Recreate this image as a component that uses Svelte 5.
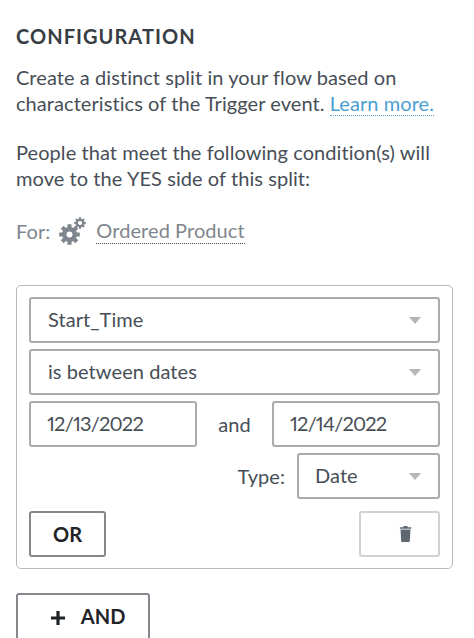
<script lang="ts">
	let field = $state('Start_Time');
	let operator = $state('is between dates');
	let startDate = $state('12/13/2022');
	let endDate = $state('12/14/2022');
	let dateType = $state('Date');
</script>

{#snippet gear(cx: number, cy: number, r: number, hole: number, teeth: number)}
	<g transform="translate({cx} {cy})">
		{#each Array(teeth) as _, i}
			<rect
				x={-r * 0.2}
				y={-r}
				width={r * 0.4}
				height={r * 0.5}
				rx="0.3"
				transform="rotate({(360 / teeth) * i})"
			/>
		{/each}
		<circle r={r * 0.72} />
		<circle r={hole} fill="#fff" />
	</g>
{/snippet}

<main class="panel">
	<h2>CONFIGURATION</h2>
	<p class="intro">
		Create a distinct split in your flow based on characteristics of the Trigger event.
		<a href="#learn">Learn more.</a>
	</p>
	<p class="intro">People that meet the following condition(s) will move to the YES side of this split:</p>

	<div class="for-row">
		<span>For:</span>
		<svg class="gears" viewBox="0 0 27 28" width="27" height="28" fill="#7f858c" aria-hidden="true">
			{@render gear(10.5, 17.5, 10.3, 3, 8)}
			{@render gear(21, 6, 5.7, 2.1, 8)}
		</svg>
		<span class="trigger">Ordered Product</span>
	</div>

	<section class="conditions">
		<div class="select">{field}<i class="caret"></i></div>
		<div class="select">{operator}<i class="caret"></i></div>
		<div class="dates">
			<div class="input">{startDate}</div>
			<span>and</span>
			<div class="input">{endDate}</div>
		</div>
		<div class="type-row">
			<span>Type:</span>
			<div class="select type">{dateType}<i class="caret"></i></div>
		</div>
		<div class="actions">
			<button class="btn or">OR</button>
			<button class="btn trash" aria-label="Delete">
				<svg viewBox="0 0 14 18" width="13" height="16" fill="#5f6871">
					<path d="M5 0h4l.6 1.3H13.4V3H.6V1.3H4.4zM1.4 4h11.2l-.7 12.6c0 .8-.6 1.4-1.4 1.4H3.5c-.8 0-1.4-.6-1.4-1.4z" />
				</svg>
			</button>
		</div>
	</section>

	<button class="btn and">
		<svg class="plus" viewBox="0 0 14 14" width="14" height="14" fill="#1f2327" aria-hidden="true">
			<path d="M5.4 0h3.2v5.4H14v3.2H8.6V14H5.4V8.6H0V5.4h5.4z" />
		</svg>
		AND
	</button>
</main>

<style>
	:global(body) {
		background: #fff;
	}

	.panel {
		box-sizing: border-box;
		width: 474px;
		height: 638px;
		overflow: hidden;
		padding: 23px 21px 0 16px;
		font-family: 'Lato', sans-serif;
		font-size: 20px;
		letter-spacing: 0.07px;
		color: #474e56;
	}

	h2 {
		margin: 0 0 15px;
		font-size: 20px;
		line-height: 26px;
		font-weight: 700;
		letter-spacing: 1.05px;
		color: #373d44;
	}

	.intro {
		margin: 0 0 23px;
		line-height: 26px;
	}

	a {
		color: #4a9fd0;
		text-decoration: none;
		border-bottom: 1px dotted #4a9fd0;
	}

	.for-row {
		display: flex;
		align-items: center;
		gap: 10px;
		height: 30px;
		margin-top: 25px;
		margin-bottom: 39px;
		color: #80868d;
	}

	.gears {
		margin: 0 0 0 -1px;
	}

	.trigger {
		border-bottom: 1px dotted #474e56;
		line-height: 25px;
	}

	.conditions {
		display: flex;
		flex-direction: column;
		gap: 6px;
		box-sizing: border-box;
		padding: 11px 12px;
		border: 1px solid #b4b9be;
		border-radius: 5px;
	}

	.select,
	.input {
		box-sizing: border-box;
		display: flex;
		align-items: center;
		height: 46px;
		padding: 0 17px 2px;
		border: 2px solid #a9abae;
		border-radius: 3px;
		color: #474e56;
	}

	.select {
		justify-content: space-between;
	}

	.caret {
		width: 0;
		height: 0;
		margin-top: 2px;
		border-left: 6.5px solid transparent;
		border-right: 6.5px solid transparent;
		border-top: 7px solid #b3b5b8;
	}

	.dates {
		display: flex;
		align-items: center;
		justify-content: space-between;
	}

	.input {
		width: 168px;
		padding-left: 16px;
		font-variant-numeric: proportional-nums;
		letter-spacing: -0.8px;
	}

	.type-row {
		display: flex;
		align-items: center;
		justify-content: flex-end;
		gap: 12px;
	}

	.type {
		width: 143px;
		padding-left: 16px;
	}

	.actions {
		display: flex;
		justify-content: space-between;
		margin-top: 6px;
	}

	.btn {
		box-sizing: border-box;
		height: 46px;
		background: #fff;
		border: 2px solid #84888c;
		border-radius: 3px;
		font-family: inherit;
		font-size: 20px;
		font-weight: 700;
		color: #1f2327;
	}

	.or {
		width: 77px;
	}

	.trash {
		display: flex;
		align-items: center;
		justify-content: flex-end;
		width: 81px;
		padding: 0 26px 0 0;
		border-color: #d0d3d5;
	}

	.and {
		display: block;
		width: 134px;
		height: 60px;
		margin-top: 24px;
		padding: 0 0 14px 10px;
	}

	.plus {
		margin-right: 12px;
		vertical-align: -1px;
	}
</style>
